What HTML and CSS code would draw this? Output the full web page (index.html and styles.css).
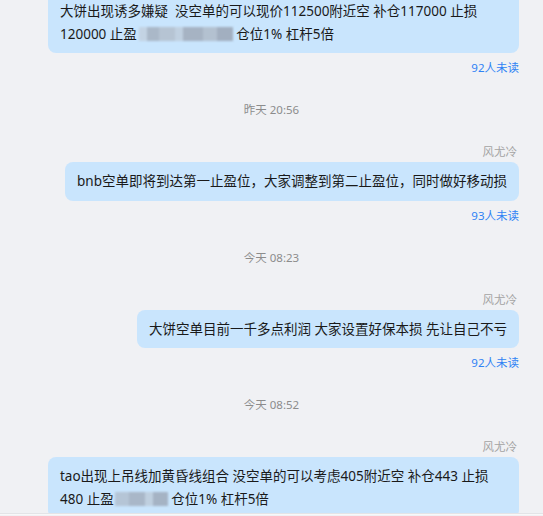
FILE: index.html
```html
<!DOCTYPE html>
<html lang="zh-CN">
<head>
    <meta charset="UTF-8">
    <meta name="viewport" content="width=device-width, initial-scale=1.0">
    <title>群消息</title>
    <link rel="stylesheet" href="styles.css">
</head>
<body>
    <div class="chat-window">
        <div class="chat-list">
            <!-- scrolled-off message -->
            <div class="msg msg-first">
                <div class="bubble">大饼出现诱多嫌疑&nbsp; 没空单的可以现价112500附近空 补仓117000 止损 120000 止盈<span class="masked masked-wide"></span> 仓位1% 杠杆5倍</div>
                <div class="unread">92人未读</div>
            </div>

            <div class="time">昨天 20:56</div>
            <div class="msg">
                <div class="sender">风尤冷</div>
                <div class="bubble">bnb空单即将到达第一止盈位，大家调整到第二止盈位，同时做好移动损</div>
                <div class="unread">93人未读</div>
            </div>

            <div class="time">今天 08:23</div>
            <div class="msg">
                <div class="sender">风尤冷</div>
                <div class="bubble">大饼空单目前一千多点利润 大家设置好保本损 先让自己不亏</div>
                <div class="unread">92人未读</div>
            </div>

            <div class="time">今天 08:52</div>
            <div class="msg">
                <div class="sender">风尤冷</div>
                <div class="bubble">tao出现上吊线加黄昏线组合 没空单的可以考虑405附近空 补仓443 止损 480 止盈<span class="masked masked-short"></span> 仓位1% 杠杆5倍</div>
                <div class="unread">92人未读</div>
            </div>
        </div>
    </div>
    <div class="input-edge"></div>
</body>
</html>
```

FILE: styles.css
```css
* {
    margin: 0;
    padding: 0;
    box-sizing: border-box;
}

body {
    background: #f0f1f4;
    font-family: "Segoe UI", "Noto Sans", "Noto Sans CJK SC", sans-serif;
    height: 516px;
    overflow: hidden;
}

.chat-window {
    height: 514px;
    overflow: hidden;
    border-bottom: 1px solid #e3e4e7;
}

.chat-list {
    display: flex;
    flex-direction: column;
    padding: 0 24px;
    margin-top: -8px;
}

.msg {
    display: flex;
    flex-direction: column;
    align-items: flex-end;
}

.sender {
    font-size: 11.5px;
    line-height: 16px;
    color: #a3a3a3;
    padding-right: 2px;
    margin-bottom: 2px;
}

.bubble {
    max-width: 471px;
    background: #c9e5fd;
    border-radius: 8px;
    padding: 8px 12px;
    font-size: 13.5px;
    line-height: 22.5px;
    color: #1a1a1a;
}

.masked {
    display: inline-block;
    height: 14px;
    vertical-align: -2px;
    filter: blur(1px);
}

.masked-wide {
    width: 94px;
    margin-left: 2px;
    background: linear-gradient(to right,
        #c3d3e3 0, #c3d3e3 8px,
        #aab8c8 8px, #aab8c8 20px,
        #b6c4d3 20px, #b6c4d3 36px,
        #c0d0e0 36px, #c0d0e0 44px,
        #a6b3c3 44px, #a6b3c3 64px,
        #b3c1d0 64px, #b3c1d0 78px,
        #a2afc0 78px, #a2afc0 94px);
}

.masked-short {
    width: 53px;
    margin-left: 1px;
    background: linear-gradient(to right,
        #b5c5d6 0, #b5c5d6 14px,
        #a9b7c8 14px, #a9b7c8 30px,
        #bfcfdf 30px, #bfcfdf 38px,
        #a5b3c4 38px, #a5b3c4 53px);
}

.unread {
    font-size: 11.5px;
    line-height: 16px;
    color: #2f83f5;
    margin-top: 7px;
}

.time {
    align-self: center;
    font-size: 11.5px;
    line-height: 16px;
    color: #8c8c8c;
    margin: 26px 0;
}

.input-edge {
    height: 1px;
    background: #f8f8f9;
}
```
